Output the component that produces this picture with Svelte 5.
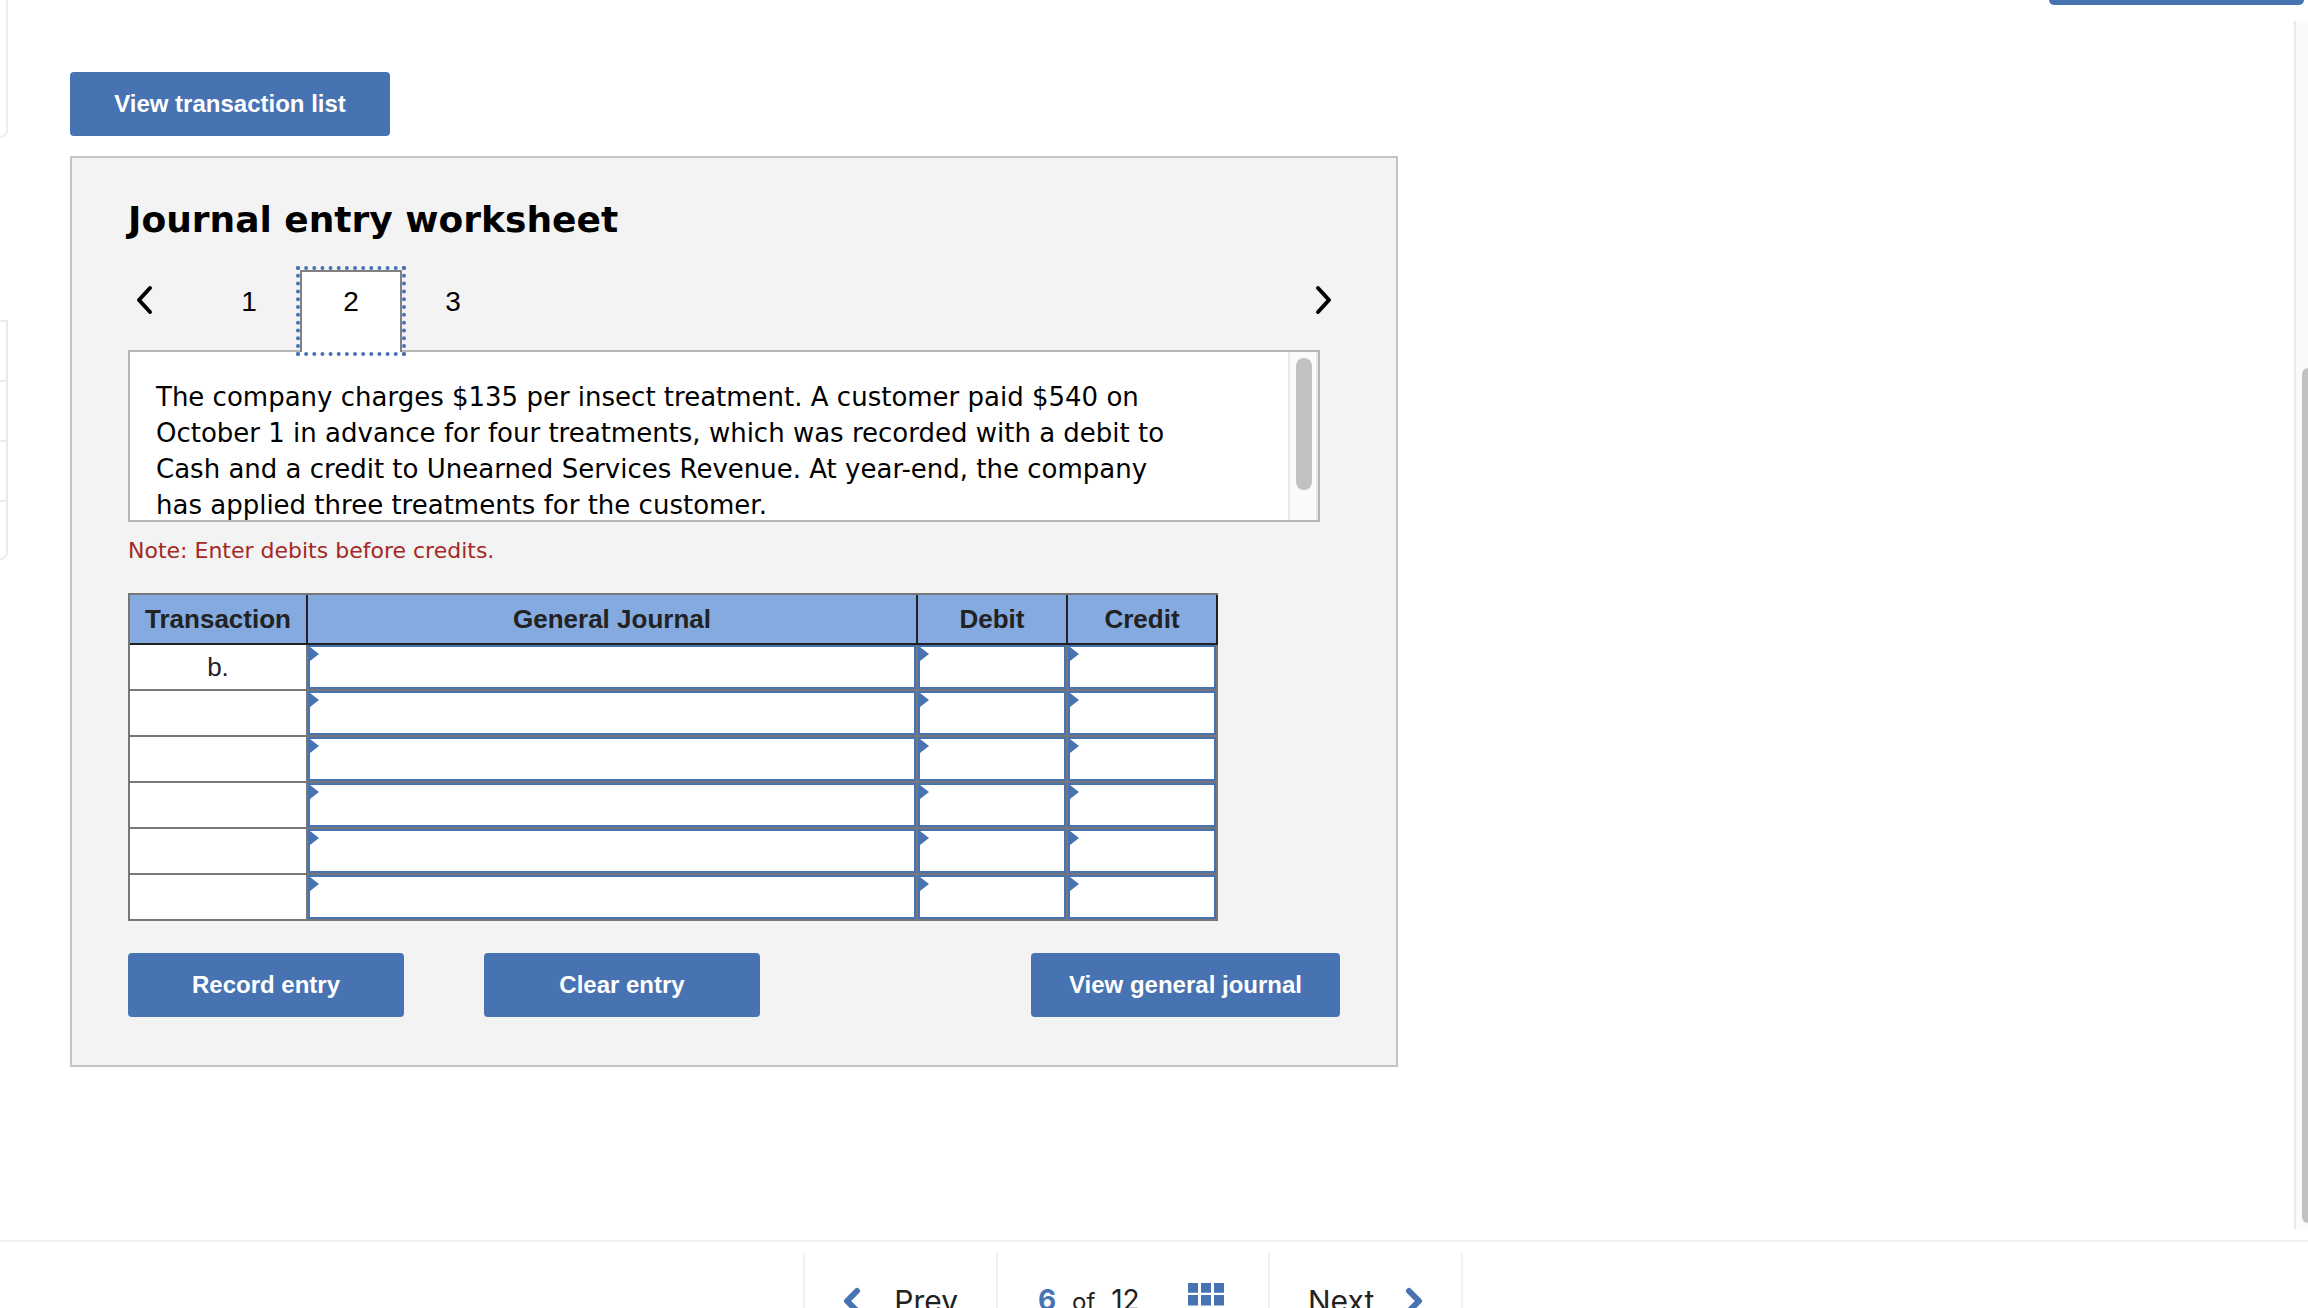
<script>
  const tabs = [1, 2, 3];
  let current = $state(2);

  let rows = $state(
    ['b.', '', '', '', '', ''].map((label) => ({ label, account: '', debit: '', credit: '' }))
  );

  function clearEntry() {
    for (const row of rows) {
      row.account = '';
      row.debit = '';
      row.credit = '';
    }
  }
</script>

<div class="page">
  <div class="body">
    <aside class="side" aria-hidden="true">
      <div class="side-card"></div>
      <div class="side-list">
        <div></div>
        <div></div>
        <div></div>
        <div></div>
      </div>
    </aside>

    <main class="content">
      <div class="top-strip"><div class="top-action"></div></div>

      <button class="btn list-btn" type="button">View transaction list</button>

      <section class="panel">
        <h1>Journal entry worksheet</h1>

        <nav class="tabs" aria-label="Worksheet pages">
          <button class="arrow" type="button" aria-label="Previous page">
            <svg width="20" height="32" viewBox="0 0 20 32"><path d="M16 4 5 16 16 28" /></svg>
          </button>
          <div class="tab-list">
            {#each tabs as tab}
              <button class="tab" class:active={tab === current} type="button" onclick={() => (current = tab)}>{tab}</button>
            {/each}
          </div>
          <button class="arrow" type="button" aria-label="Next page">
            <svg width="20" height="32" viewBox="0 0 20 32"><path d="M4 4 15 16 4 28" /></svg>
          </button>
        </nav>

        <div class="description">
          <p>
            The company charges $135 per insect treatment. A customer paid $540 on October 1 in
            advance for four treatments, which was recorded with a debit to Cash and a credit to
            Unearned Services Revenue. At year-end, the company has applied three treatments for
            the customer.
          </p>
          <div class="track"><div class="thumb"></div></div>
        </div>

        <p class="note">Note: Enter debits before credits.</p>

        <table>
          <thead>
            <tr>
              <th class="c-trans">Transaction</th>
              <th>General Journal</th>
              <th class="c-amount">Debit</th>
              <th class="c-amount">Credit</th>
            </tr>
          </thead>
          <tbody>
            {#each rows as row, i}
              <tr>
                <td class="label">{row.label}</td>
                <td><div class="field"><input aria-label={`General journal, line ${i + 1}`} bind:value={row.account} /></div></td>
                <td><div class="field"><input aria-label={`Debit, line ${i + 1}`} bind:value={row.debit} /></div></td>
                <td><div class="field"><input aria-label={`Credit, line ${i + 1}`} bind:value={row.credit} /></div></td>
              </tr>
            {/each}
          </tbody>
        </table>

        <div class="actions">
          <button class="btn entry-btn" type="button">Record entry</button>
          <button class="btn entry-btn" type="button" onclick={clearEntry}>Clear entry</button>
          <button class="btn journal-btn" type="button">View general journal</button>
        </div>
      </section>
    </main>

    <div class="page-track" aria-hidden="true"><div class="page-thumb"></div></div>
  </div>

  <footer>
    <div class="pager">
      <button class="step" type="button">
        <svg width="18" height="28" viewBox="0 0 18 28"><path d="M14 4 4 14 14 24" /></svg>
        <span>Prev</span>
      </button>
      <div class="count">
        <span><b>6</b> <small>of</small> 12</span>
        <button class="grid-btn" type="button" aria-label="All questions">
          <svg width="36" height="36" viewBox="0 0 36 36">
            <path d="M0 0h10v14H0zM13 0h10v14H13zM26 0h10v14H26zM0 17h10v15H0zM13 17h10v15H13zM26 17h10v15H26z" transform="scale(1 .7)" />
          </svg>
        </button>
      </div>
      <button class="step" type="button">
        <span>Next</span>
        <svg width="18" height="28" viewBox="0 0 18 28"><path d="M4 4 14 14 4 24" /></svg>
      </button>
    </div>
  </footer>
</div>

<style>
  :global(body) {
    background: #fff;
  }

  .page {
    display: flex;
    flex-direction: column;
    height: 100vh;
    overflow: hidden;
    font-family: 'Liberation Sans', Arial, sans-serif;
    color: #222;
  }

  button {
    border: 0;
    padding: 0;
    background: none;
    color: inherit;
    font: inherit;
    cursor: pointer;
  }

  svg {
    display: block;
    fill: none;
    stroke: currentColor;
    stroke-linecap: round;
    stroke-linejoin: round;
  }

  .body {
    display: flex;
    flex: 1;
    min-height: 0;
  }

  .side {
    flex: none;
    width: 8px;
  }

  .side-card {
    box-sizing: border-box;
    height: 138px;
    border: solid #eee;
    border-width: 0 2px 2px 0;
    border-radius: 0 0 8px 0;
  }

  .side-list {
    margin-top: 182px;
    border: solid #eaeaea;
    border-width: 2px 2px 0 0;
    border-radius: 0 0 8px 0;
  }

  .side-list div {
    height: 58px;
    border-bottom: 2px solid #eaeaea;
  }

  .side-list div:last-child {
    height: 56px;
    border-radius: 0 0 8px 0;
  }

  .content {
    flex: 1;
    min-width: 0;
    padding-left: 62px;
  }

  .top-strip {
    display: flex;
    justify-content: flex-end;
    height: 72px;
    margin-right: -10px;
  }

  .top-action {
    width: 255px;
    height: 5px;
    border-radius: 0 0 6px 6px;
    background: #4773b3;
  }

  .btn {
    height: 64px;
    border-radius: 4px;
    background: #4773b3;
    color: #fff;
    font-size: 24px;
    font-weight: 700;
  }

  .list-btn {
    display: block;
    width: 320px;
  }

  .panel {
    box-sizing: border-box;
    max-width: 1328px;
    margin-top: 20px;
    padding: 37px 56px 48px;
    border: 2px solid #c4c4c4;
    background: #f3f3f3;
  }

  h1 {
    margin: 0;
    color: #000;
    font: 700 36px/50px Verdana, 'DejaVu Sans', sans-serif;
  }

  .tabs {
    display: flex;
    gap: 44px;
    height: 82px;
    margin-top: 25px;
    padding: 0 6px;
    color: #000;
  }

  .arrow {
    height: 60px;
  }

  .arrow svg {
    stroke-width: 4;
  }

  .tab-list {
    display: flex;
    flex: 1;
  }

  .tab {
    box-sizing: border-box;
    width: 102px;
    height: 82px;
    padding-bottom: 20px;
    font-size: 28px;
    border: solid transparent;
    border-width: 2px 2px 0;
  }

  .tab.active {
    position: relative;
    border-color: #808080;
    background: #fff;
    outline: 4px dotted #4773b3;
  }

  .description {
    box-sizing: border-box;
    display: flex;
    height: 172px;
    margin: -2px 20px 0 0;
    border: 2px solid #b5b5b5;
    background: #fff;
    overflow: hidden;
  }

  .description p {
    flex: 1;
    margin: 0;
    padding: 27px 90px 0 26px;
    color: #000;
    font: 26px/36px Verdana, 'DejaVu Sans', sans-serif;
  }

  .track {
    box-sizing: border-box;
    flex: none;
    width: 30px;
    padding: 6px;
    border: solid #e8e8e8;
    border-width: 0 2px;
    background: #fafafa;
  }

  .thumb {
    width: 16px;
    height: 132px;
    border-radius: 8px;
    background: #c1c1c1;
  }

  .note {
    margin: 13px 0 26px;
    color: #a42823;
    font: 22px/32px Verdana, 'DejaVu Sans', sans-serif;
  }

  table {
    width: 100%;
    max-width: 1090px;
    table-layout: fixed;
    border: solid #777;
    border-width: 2px 0 0 2px;
    border-collapse: separate;
    border-spacing: 0;
    background: #fff;
    font-size: 26px;
  }

  th,
  td {
    box-sizing: border-box;
    padding: 0;
    border: solid #777;
    border-width: 0 2px 2px 0;
    text-align: center;
  }

  th {
    height: 50px;
    border-color: #222;
    background: #84aae0;
  }

  td {
    height: 46px;
  }

  .c-trans {
    width: 178px;
  }

  .c-amount {
    width: 150px;
  }

  .field {
    position: relative;
  }

  .field::before {
    content: '';
    position: absolute;
    left: 2px;
    top: 2px;
    border: solid transparent;
    border-width: 7px 0 7px 9px;
    border-left-color: #4773b3;
  }

  input {
    box-sizing: border-box;
    display: block;
    width: 100%;
    height: 44px;
    padding: 0 12px;
    border: 2px solid #4773b3;
    border-radius: 0;
    background: #fff;
    font: inherit;
  }

  .actions {
    display: flex;
    gap: 80px;
    margin-top: 32px;
  }

  .entry-btn {
    width: 276px;
  }

  .journal-btn {
    width: 309px;
    margin-left: auto;
  }

  .page-track {
    box-sizing: border-box;
    flex: none;
    width: 14px;
    margin: 21px 0 11px;
    padding: 347px 0 6px 6px;
    border-left: 2px solid #e8e8e8;
    background: #fafafa;
  }

  .page-thumb {
    height: 100%;
    border-radius: 8px 0 0 8px;
    background: #c1c1c1;
  }

  footer {
    flex: none;
    height: 66px;
    border-top: 2px solid #f1f1f1;
    overflow: hidden;
  }

  .pager {
    display: flex;
    justify-content: center;
    height: 96px;
    margin: 11px 42px 0 0;
    font: 28px/96px Inter, sans-serif;
  }

  .pager > * {
    display: flex;
    align-items: center;
    box-sizing: border-box;
    border-left: 2px solid #f1f1f1;
  }

  .pager > :last-child {
    border-right: 2px solid #f1f1f1;
  }

  .step {
    justify-content: space-between;
    width: 193px;
    padding: 0 38px;
  }

  .pager > :last-child {
    width: 195px;
  }

  .step svg {
    color: #4773b3;
    stroke-width: 6;
  }

  .step span {
    font-size: 30px;
  }

  .count {
    justify-content: space-between;
    width: 272px;
    padding: 0 44px 0 40px;
  }

  .count b,
  .grid-btn {
    color: #4773b3;
  }

  .count small {
    margin: 0 8px;
    font-size: 24px;
  }

  .grid-btn svg {
    fill: currentColor;
    stroke: none;
  }
</style>
